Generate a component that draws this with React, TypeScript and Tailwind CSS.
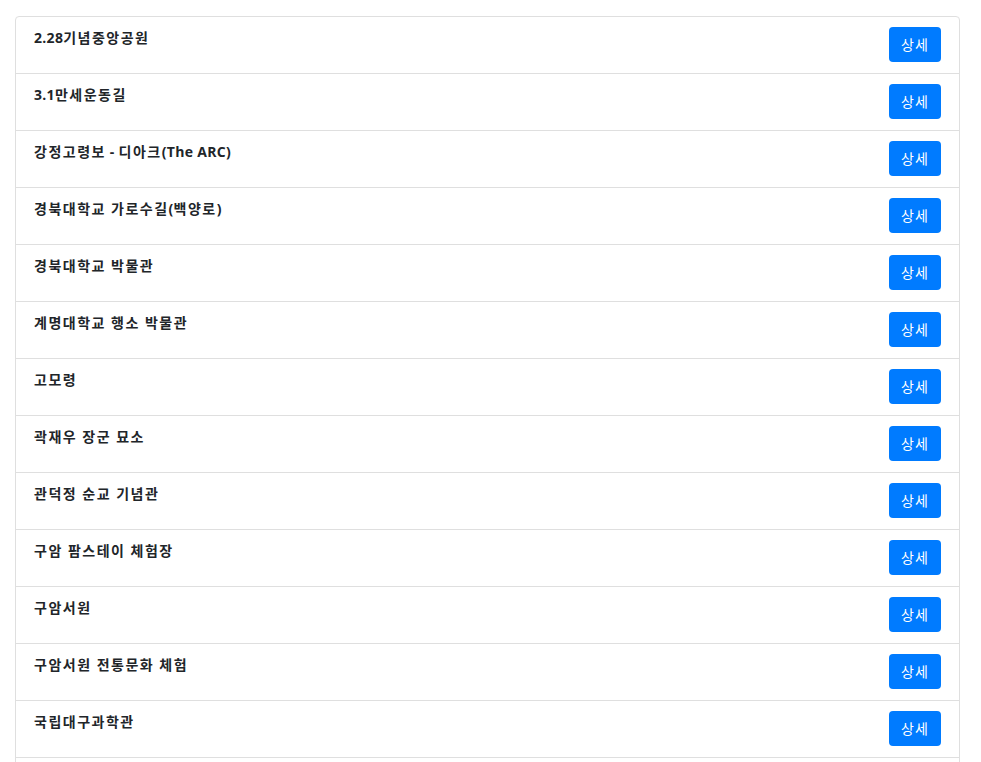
import React from "react";

const places = [
  "2.28기념중앙공원",
  "3.1만세운동길",
  "강정고령보 - 디아크(The ARC)",
  "경북대학교 가로수길(백양로)",
  "경북대학교 박물관",
  "계명대학교 행소 박물관",
  "고모령",
  "곽재우 장군 묘소",
  "관덕정 순교 기념관",
  "구암 팜스테이 체험장",
  "구암서원",
  "구암서원 전통문화 체험",
  "국립대구과학관",
  "국채보상운동기념공원",
  "김광석다시그리기길",
];

function Label({ text }: { text: string }) {
  const parts = text.split(/([가-힣]+(?: [가-힣]+)*)/);
  return (
    <span className="text-[14px] leading-[21px] font-bold text-[#212529]">
      {parts.map((part, i) =>
        /[가-힣]/.test(part) ? (
          <span key={i} className="tracking-[1.5px] font-semibold">
            {part}
          </span>
        ) : (
          <span key={i} className="tracking-[0.3px]">{part}</span>
        )
      )}
    </span>
  );
}

export default function App() {
  return (
    <div
      className="bg-white min-h-screen pt-4"
      style={{ fontFamily: '"Open Sans", "Noto Sans CJK KR", sans-serif' }}
    >
      <ul className="ml-[15px] w-[945px] border border-[#dfdfdf] rounded">
        {places.map((p, i) => (
          <li
            key={i}
            className={`flex justify-between items-start pt-[10px] pb-[11px] pl-[18px] pr-[18px] ${
              i < places.length - 1 ? "border-b border-[#dfdfdf]" : ""
            }`}
          >
            <Label text={p} />
            <button className="w-[52px] h-[35px] rounded bg-[#007bff] text-white text-[14px] leading-[21px] flex items-center justify-center tracking-[1px]">
              상세
            </button>
          </li>
        ))}
      </ul>
    </div>
  );
}
